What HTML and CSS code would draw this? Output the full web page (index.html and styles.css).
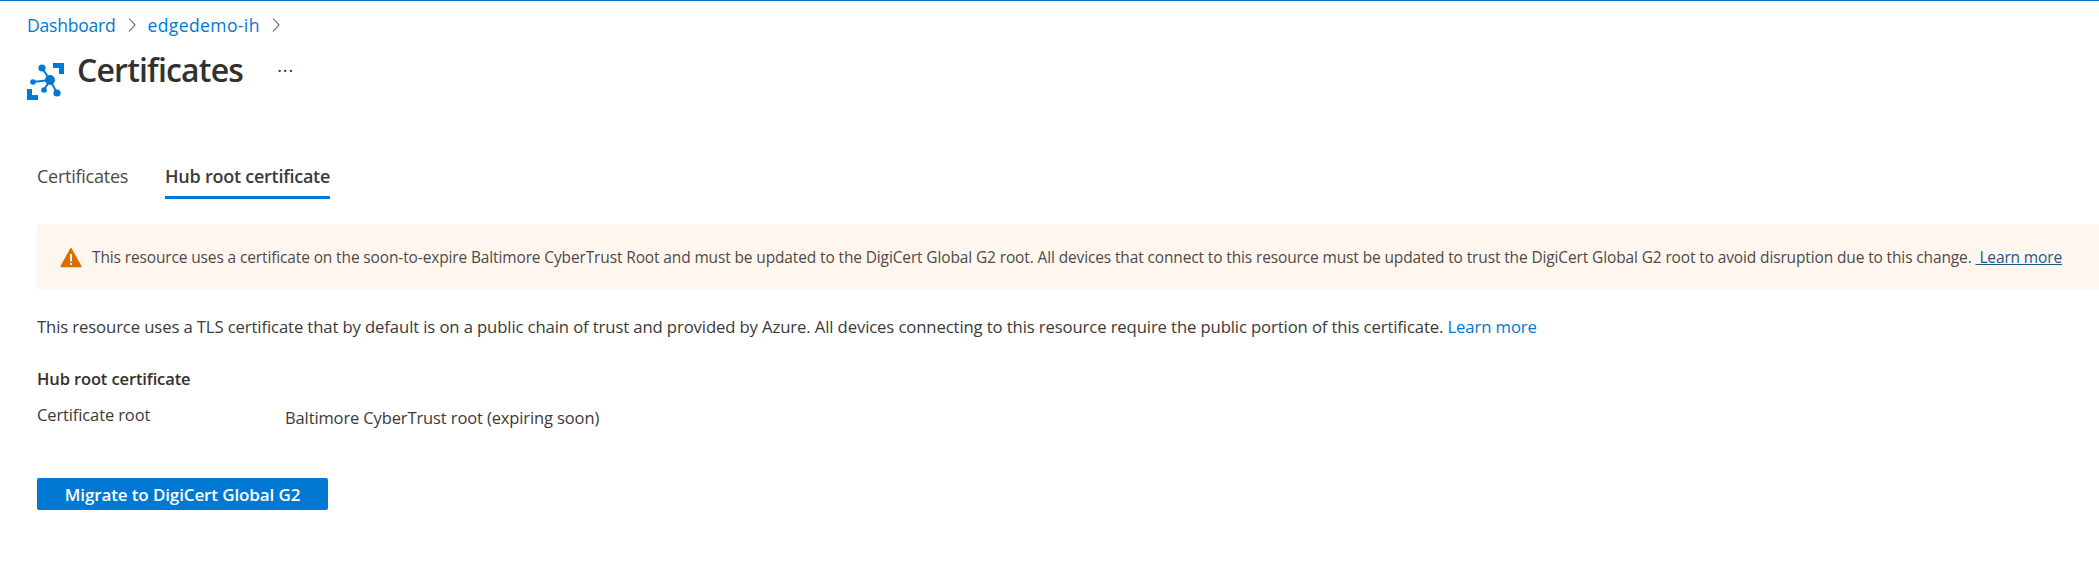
FILE: index.html
```html
<!DOCTYPE html>
<html lang="en">
<head>
    <meta charset="UTF-8">
    <meta name="viewport" content="width=device-width, initial-scale=1.0">
    <title>Certificates</title>
    <link rel="stylesheet" href="styles.css">
</head>
<body>
    <nav class="breadcrumb">
        <a href="#">Dashboard</a>
        <svg class="chevron" viewBox="0 0 8 16"><path d="M1 1.5 7 8 1 14.5"/></svg>
        <a href="#" class="crumb-wide">edgedemo-ih</a>
        <svg class="chevron" viewBox="0 0 8 16"><path d="M1 1.5 7 8 1 14.5"/></svg>
    </nav>

    <header class="title-row">
        <svg class="hub-icon" viewBox="0 0 38 38">
            <path class="hub-corner" d="M26 1h11v11h-5V6h-6zM0 27h5v6h6v5H0z"/>
            <path class="hub-spokes" d="M15 6 23 18 6 20M23 18 17 28M23 18 30 31"/>
            <circle class="hub-node" cx="23" cy="18" r="5"/>
            <circle class="hub-node" cx="15" cy="6" r="3.6"/>
            <circle class="hub-node" cx="6" cy="20" r="2.8"/>
            <circle class="hub-node" cx="17" cy="28" r="2.8"/>
            <circle class="hub-node" cx="30" cy="31" r="3.6"/>
        </svg>
        <h1>Certificates</h1>
        <span class="more">···</span>
    </header>

    <main class="content">
        <div class="tabs">
            <div class="tab">Certificates</div>
            <div class="tab active">Hub root certificate</div>
        </div>

        <div class="banner">
            <svg class="warn-icon" viewBox="0 0 22 21">
                <path class="warn-shape" d="M11 1.5 21 19.5H1z"/>
                <rect class="warn-mark" x="10" y="7" width="2" height="7.5"/>
                <rect class="warn-mark" x="10" y="16" width="2" height="2"/>
            </svg>
            <span>This resource uses a certificate on the soon-to-expire Baltimore CyberTrust Root and must be updated to the DigiCert Global G2 root. All devices that connect to this resource must be updated to trust the DigiCert Global G2 root to avoid disruption due to this change. <a href="#" class="banner-link">&nbsp;Learn more</a></span>
        </div>

        <p class="intro">This resource uses a TLS certificate that by default is on a public chain of trust and provided by Azure. All devices connecting to this resource require the public portion of this certificate. <a href="#">Learn more</a></p>

        <h2>Hub root certificate</h2>
        <div class="field">
            <div class="field-label">Certificate root</div>
            <div class="field-value">Baltimore CyberTrust root (expiring soon)</div>
        </div>

        <button>Migrate to DigiCert Global G2</button>
    </main>
</body>
</html>
```

FILE: styles.css
```css
html, body { height: 100%; }
body {
    font-family: "Open Sans", "Noto Sans", sans-serif;
    font-size: 16px;
    color: #323130;
    margin: 0;
    border-top: 1px solid #0078d4;
    overflow: hidden;
    box-sizing: border-box;
}
a { color: #0078d4; text-decoration: none; }

.breadcrumb {
    display: flex;
    align-items: center;
    gap: 12px;
    height: 24px;
    padding: 12px 0 0 27px;
    font-size: 17.5px;
    letter-spacing: -0.2px;
}
.crumb-wide { letter-spacing: 0.4px; }
.chevron { width: 8px; height: 16px; fill: none; stroke: #605e5c; stroke-width: 1.1; }

.title-row { display: flex; align-items: flex-start; padding: 13px 0 0 27px; }
.hub-icon { width: 38px; height: 38px; margin-top: 12px; flex-shrink: 0; }
.hub-corner { fill: #0078d4; }
.hub-spokes { fill: none; stroke: #0078d4; stroke-width: 2; }
.hub-node { fill: #0078d4; }
h1 {
    font-size: 32px;
    font-weight: 550;
    line-height: 40px;
    margin: 0 0 0 12px;
    letter-spacing: -0.8px;
}
.more { margin: 8px 0 0 34px; font-size: 18px; letter-spacing: 1px; color: #323130; line-height: 24px; }

.content { padding: 53px 0 0 37px; }

.tabs { display: flex; gap: 37px; height: 46px; }
.tab { height: 35px; padding-top: 8px; line-height: 30px; font-size: 18px; letter-spacing: -0.25px; color: #4d4a48; }
.tab.active { font-weight: 600; color: #3b3a39; border-bottom: 3px solid #0078d4; }

.banner {
    display: flex;
    align-items: center;
    gap: 10px;
    height: 66px;
    margin-top: 25px;
    padding-left: 23px;
    background: #fff6f0;
    border-radius: 2px;
    white-space: nowrap;
    font-size: 15.47px;
    letter-spacing: -0.12px;
    color: #4d4a48;
}
.warn-icon { width: 22px; height: 21px; flex-shrink: 0; }
.warn-shape { fill: #dc6d00; stroke: #dc6d00; stroke-width: 1.4; stroke-linejoin: round; }
.warn-mark { fill: #fff6f0; }
.banner-link { color: #1b5a86; text-decoration: underline; }

.intro {
    margin: 25px 0 0;
    line-height: 24px;
    font-size: 16.7px;
    letter-spacing: -0.12px;
    white-space: nowrap;
    color: #3b3a39;
}

h2 { margin: 28px 0 0; font-size: 16.5px; line-height: 24px; font-weight: 600; letter-spacing: -0.12px; }

.field { display: flex; font-size: 16.5px; letter-spacing: -0.12px; margin-top: 12px; }
.field-label { width: 248px; line-height: 24px; color: #3b3a39; }
.field-value { line-height: 24px; margin-top: 3px; color: #3b3a39; }

button {
    display: block;
    width: 291px;
    height: 32px;
    margin-top: 48px;
    padding: 0;
    border: none;
    border-radius: 2px;
    background-color: #0078d4;
    color: white;
    font-family: inherit;
    font-size: 17px;
    font-weight: 600;
    letter-spacing: -0.12px;
    cursor: pointer;
}
```
